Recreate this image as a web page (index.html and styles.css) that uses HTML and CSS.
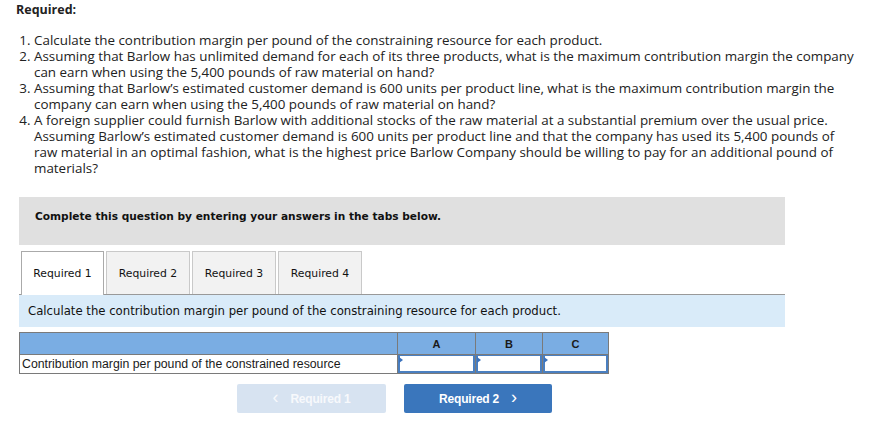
FILE: index.html
```html
<!DOCTYPE html>
<html>
<head>
<meta charset="utf-8">
<link rel="stylesheet" href="styles.css">
</head>
<body>
<div class="page">
  <div class="req-title">Required:</div>
  <ol class="req-list">
    <li>Calculate the contribution margin per pound of the constraining resource for each product.</li>
    <li>Assuming that Barlow has unlimited demand for each of its three products, what is the maximum contribution margin the company can earn when using the 5,400 pounds of raw material on hand?</li>
    <li>Assuming that Barlow’s estimated customer demand is 600 units per product line, what is the maximum contribution margin the company can earn when using the 5,400 pounds of raw material on hand?</li>
    <li>A foreign supplier could furnish Barlow with additional stocks of the raw material at a substantial premium over the usual price. Assuming Barlow’s estimated customer demand is 600 units per product line and that the company has used its 5,400 pounds of raw material in an optimal fashion, what is the highest price Barlow Company should be willing to pay for an additional pound of materials?</li>
  </ol>

  <div class="notice">Complete this question by entering your answers in the tabs below.</div>

  <div class="tabs">
    <div class="tab active">Required 1</div>
    <div class="tab">Required 2</div>
    <div class="tab">Required 3</div>
    <div class="tab">Required 4</div>
  </div>
  <div class="prompt">Calculate the contribution margin per pound of the constraining resource for each product.</div>

  <table class="grid">
    <tr class="head">
      <th class="label-col"></th>
      <th class="col-a">A</th>
      <th class="col-b">B</th>
      <th class="col-c">C</th>
    </tr>
    <tr>
      <td class="label">Contribution margin per pound of the constrained resource</td>
      <td class="cell"><div class="inp"></div></td>
      <td class="cell"><div class="inp"></div></td>
      <td class="cell"><div class="inp"></div></td>
    </tr>
  </table>

  <div class="nav">
    <div class="btn prev"><span class="chev">&lsaquo;</span>Required 1</div>
    <div class="btn next">Required 2<span class="chev">&rsaquo;</span></div>
  </div>
</div>
</body>
</html>
```

FILE: styles.css
```css
html, body {
  margin: 0;
  padding: 0;
  background: #fff;
}
.page {
  width: 878px;
  padding: 2px 0 0 0;
  color: #1f1f1f;
}
.req-title {
  font-family: "Open Sans", "Lato", sans-serif;
  font-weight: 700;
  font-size: 12.5px;
  line-height: 16px;
  margin-left: 16px;
  color: #222;
}
.req-list {
  font-family: "Open Sans", "Lato", sans-serif;
  font-size: 13.4px;
  line-height: 16px;
  margin: 14px 0 0 0;
  padding: 0 0 0 34px;
  width: 823px;
  color: #222;
}
.req-list li {
  padding-left: 0;
}
.notice {
  margin: 21px 0 0 19px;
  width: 766px;
  height: 48px;
  box-sizing: border-box;
  background: #e0e0e0;
  padding: 12px 16px 0 16px;
  font-family: "DejaVu Sans", Verdana, sans-serif;
  font-weight: 700;
  font-size: 10.6px;
  line-height: 14px;
  color: #111;
}
.tabs {
  display: flex;
  margin: 6px 0 0 21px;
  gap: 2px;
  height: 43px;
  align-items: flex-end;
}
.tab {
  width: 84px;
  height: 43px;
  box-sizing: border-box;
  border: 1px solid #c9c9c9;
  border-bottom: none;
  background: #f2f2f2;
  font-family: "DejaVu Sans", Verdana, sans-serif;
  font-size: 10.8px;
  display: flex;
  align-items: center;
  justify-content: center;
  color: #111;
}
.tab.active {
  background: #fff;
  border-color: #aaa;
  width: 83px;
  height: 44px;
  margin-bottom: -1px;
  position: relative;
  z-index: 1;
}
.prompt {
  margin-left: 19px;
  width: 766px;
  box-sizing: border-box;
  border-top: 1px solid #999;
  background: #d9ebf9;
  height: 33px;
  padding: 8px 0 0 9px;
  font-family: "DejaVu Sans", Verdana, sans-serif;
  font-size: 11.7px;
  line-height: 16px;
  color: #111;
}
.grid {
  margin: 5px 0 0 19px;
  border-collapse: collapse;
  font-family: "Liberation Sans", Arial, sans-serif;
}
.grid th, .grid td {
  border: 1px solid #7a7a7a;
  padding: 0;
}
.grid .head th {
  background: #7aade3;
  height: 21px;
  font-size: 11px;
  font-weight: 700;
  color: #1a1a1a;
}
.label-col { width: 377px; }
.col-a { width: 77px; }
.col-b { width: 66px; }
.col-c { width: 65px; }
.grid td.label {
  height: 18px;
  font-size: 12.3px;
  padding-left: 2px;
  color: #1a1a1a;
  text-align: left;
}
.grid td.cell {
  height: 18px;
  position: relative;
}
.inp {
  position: absolute;
  inset: 0;
  border: 2px solid #4a7fc0;
  border-width: 1.5px 2px 2px 2px;
}
.inp::before {
  content: "";
  position: absolute;
  left: -1px;
  top: 1px;
  border-left: 4px solid #3a72bd;
  border-top: 3px solid transparent;
  border-bottom: 3px solid transparent;
}
.nav {
  display: flex;
  margin: 10px 0 0 237px;
  gap: 18px;
}
.btn {
  width: 149px;
  height: 29px;
  border-radius: 2px;
  display: flex;
  align-items: center;
  justify-content: center;
  font-family: "Liberation Sans", Arial, sans-serif;
  font-weight: 700;
  font-size: 12px;
  letter-spacing: -0.2px;
  color: #fff;
}
.btn.prev {
  background: #d7e3f1;
  color: #f7f9fc;
}
.btn.next {
  background: #3a76bc;
  width: 148px;
}
.chev {
  font-size: 18px;
  font-weight: 400;
  line-height: 1;
  margin-top: -3px;
}
.prev .chev { margin-right: 12px; }
.next .chev { margin-left: 12px; }
```
